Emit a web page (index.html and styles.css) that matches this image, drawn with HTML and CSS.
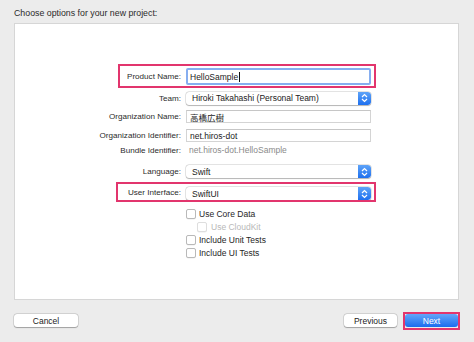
FILE: index.html
```html
<!DOCTYPE html>
<html>
<head>
<meta charset="utf-8">
<link rel="stylesheet" href="styles.css">
</head>
<body>
<div class="title">Choose options for your new project:</div>
<div class="panel">
  <div class="row r-product hl hl-product">
    <div class="label">Product Name:</div>
    <div class="field input focus">HelloSample<span class="caret"></span></div>
  </div>
  <div class="row r-team">
    <div class="label">Team:</div>
    <div class="field popup"><span class="pv">Hiroki Takahashi (Personal Team)</span><span class="stepper"><svg width="7" height="10" viewBox="0 0 7 10"><path d="M1 4 L3.5 1.5 L6 4 M1 6 L3.5 8.5 L6 6" fill="none" stroke="#fff" stroke-width="1.2"/></svg></span></div>
  </div>
  <div class="row r-orgname">
    <div class="label">Organization Name:</div>
    <div class="field input">高橋広樹</div>
  </div>
  <div class="row r-orgid">
    <div class="label">Organization Identifier:</div>
    <div class="field input">net.hiros-dot</div>
  </div>
  <div class="row r-bundle">
    <div class="label">Bundle Identifier:</div>
    <div class="field plain">net.hiros-dot.HelloSample</div>
  </div>
  <div class="row r-lang">
    <div class="label">Language:</div>
    <div class="field popup"><span class="pv">Swift</span><span class="stepper"><svg width="7" height="10" viewBox="0 0 7 10"><path d="M1 4 L3.5 1.5 L6 4 M1 6 L3.5 8.5 L6 6" fill="none" stroke="#fff" stroke-width="1.2"/></svg></span></div>
  </div>
  <div class="row r-ui hl hl-ui">
    <div class="label">User Interface:</div>
    <div class="field popup"><span class="pv">SwiftUI</span><span class="stepper"><svg width="7" height="10" viewBox="0 0 7 10"><path d="M1 4 L3.5 1.5 L6 4 M1 6 L3.5 8.5 L6 6" fill="none" stroke="#fff" stroke-width="1.2"/></svg></span></div>
  </div>
  <div class="checks">
    <div class="check"><span class="box"></span>Use Core Data</div>
    <div class="check sub disabled"><span class="box"></span>Use CloudKit</div>
    <div class="check"><span class="box"></span>Include Unit Tests</div>
    <div class="check"><span class="box"></span>Include UI Tests</div>
  </div>
</div>
<div class="footer">
  <div class="btn cancel">Cancel</div>
  <div class="spacer"></div>
  <div class="btn prev">Previous</div>
  <div class="btn next">Next</div>
</div>
</body>
</html>
```
FILE: styles.css
```css
* { box-sizing: border-box; }
html, body { margin: 0; padding: 0; }
body {
  width: 474px;
  height: 342px;
  background: #ececec;
  font-family: "Liberation Sans", Arial, "Noto Sans CJK JP", sans-serif;
  color: #262626;
  overflow: hidden;
}
.title {
  height: 23px;
  padding: 8px 0 0 14px;
  font-size: 8.8px;
  line-height: 10px;
  color: #2a2a2a;
}
.panel {
  margin: 0 15px 0 14px;
  height: 277px;
  background: #fff;
  border: 1px solid #d6d6d6;
  padding-top: 42px;
}
.row {
  display: flex;
  align-items: center;
  position: relative;
}
.label {
  width: 166px;
  text-align: right;
  font-size: 8.1px;
  color: #2b2b2b;
  white-space: nowrap;
}
.field {
  margin-left: 5px;
  width: 185px;
  font-size: 8.5px;
  white-space: nowrap;
}
.r-product { height: 20px; }
.r-team { height: 14px; margin-top: 5px; }
.r-orgname { height: 13px; margin-top: 5px; }
.r-orgid { height: 13px; margin-top: 6px; }
.r-bundle { height: 12px; margin-top: 2px; }
.r-lang { height: 13px; margin-top: 9px; }
.r-ui { height: 15px; margin-top: 7px; }

.hl::after {
  content: "";
  position: absolute;
  top: -2px;
  bottom: -2px;
  right: 82px;
  border: 2px solid #e2356d;
}
.hl-product::after { left: 103px; }
.hl-ui::after { left: 101px; top: -3px; }
.r-ui .popup { align-self: flex-end; }

.input {
  height: 13px;
  border: 1px solid #d4d4d4;
  border-top-color: #c6c6c6;
  background: #fff;
  padding: 0 0 0 3px;
  display: flex;
  align-items: center;
  color: #222;
}
.input.focus {
  height: 17px;
  width: 185px;
  border: 2px solid #86aef0;
  border-radius: 2px;
  padding-left: 2px;
  margin-top: 1px;
}
.caret {
  display: inline-block;
  width: 1px;
  height: 10px;
  background: #111;
  margin-left: 1px;
}
.plain {
  color: #8a8a8a;
  padding-left: 3px;
}
.popup {
  height: 13px;
  border-radius: 3px;
  background: #fff;
  box-shadow: 0 0 0 0.5px rgba(0,0,0,0.18), 0 0.5px 1px rgba(0,0,0,0.22);
  display: flex;
  align-items: center;
  justify-content: space-between;
  overflow: hidden;
}
.pv { padding-left: 6px; font-size: 8.5px; color: #222; }
.stepper {
  width: 13px;
  height: 13px;
  background: linear-gradient(#5ea3f8, #1e70ef);
  display: flex;
  align-items: center;
  justify-content: center;
  border-radius: 0 3px 3px 0;
}
.checks {
  margin-top: 7px;
  padding-left: 171px;
}
.check {
  height: 13px;
  display: flex;
  align-items: center;
  font-size: 8.5px;
  color: #262626;
}
.box {
  width: 10px;
  height: 10px;
  border: 1px solid #b9b9b9;
  border-radius: 2px;
  background: #fff;
  margin-right: 3px;
  box-shadow: 0 0.5px 0.5px rgba(0,0,0,0.08);
}
.check.sub { padding-left: 11px; }
.check.sub .box { margin-right: 4px; }
.check.disabled { color: #b8b8b8; }
.check.disabled .box { border-color: #dedede; }

.footer {
  display: flex;
  align-items: center;
  padding: 0 16px 0 14px;
  margin-top: 14px;
  height: 13px;
}
.spacer { flex: 1; }
.btn {
  height: 13px;
  border-radius: 3px;
  font-size: 8.5px;
  display: flex;
  align-items: center;
  justify-content: center;
  background: #fff;
  box-shadow: 0 0 0 0.5px rgba(0,0,0,0.18), 0 0.5px 1px rgba(0,0,0,0.25);
  color: #222;
}
.cancel { width: 64px; }
.prev { width: 53px; }
.next {
  width: 53px;
  margin-left: 8px;
  color: #fff;
  background: linear-gradient(#64a6f9, #1b6cee);
  position: relative;
  box-shadow: none;
}
.next::after {
  content: "";
  position: absolute;
  left: -2px;
  right: -2px;
  top: -2px;
  bottom: -3px;
  border: 2px solid #e2356d;
}
```
